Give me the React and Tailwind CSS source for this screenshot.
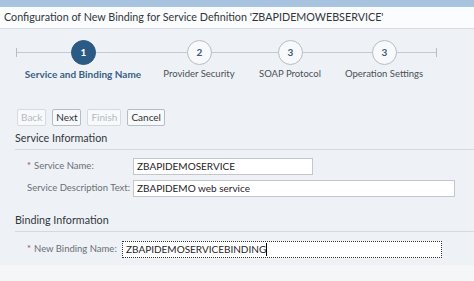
import { Fragment } from 'react';

const steps = [
  { n: '1', label: 'Service and Binding Name', x: 83, active: true },
  { n: '2', label: 'Provider Security', x: 199 },
  { n: '3', label: 'SOAP Protocol', x: 290 },
  { n: '3', label: 'Operation Settings', x: 384 },
];

function Stepper() {
  return (
    <div className="relative h-[64px]">
      {/* track */}
      <div className="absolute left-[16px] top-[21px] w-[420px] h-px bg-[#c5c9cd]" />
      <div className="absolute left-[16px] top-[17px] w-px h-[9px] bg-[#b9bdc1]" />
      <div className="absolute left-[436px] top-[17px] w-px h-[9px] bg-[#b9bdc1]" />
      {steps.map((s, i) => (
        <Fragment key={i}>
          <div
            className={`absolute top-[9px] w-[25px] h-[25px] -ml-[12px] rounded-full flex items-center justify-center text-[10px] font-bold ${
              s.active
                ? 'bg-[#2b5a85] text-white border border-[#2b5a85]'
                : 'bg-[#f7f9fb] text-[#3d5a78] border border-[#b8bdc2]'
            }`}
            style={{ left: s.x }}
          >
            {s.n}
          </div>
          <div
            className={`absolute top-[36px] -translate-x-1/2 whitespace-nowrap ${
              s.active ? 'text-[10px] font-bold text-[#3b5f85]' : 'text-[9.5px] text-[#4a4f55]'
            }`}
            style={{ left: s.x }}
          >
            {s.label}
          </div>
        </Fragment>
      ))}
    </div>
  );
}

function Btn({ children, disabled }) {
  return (
    <div
      className={`h-[17px] px-[3px] flex items-center border rounded-[2px] text-[10px] bg-[#f7f9fb] ${
        disabled ? 'border-[#d7dbdf] text-[#b4b9be]' : 'border-[#b7bcc1] text-[#2e3338]'
      }`}
    >
      {children}
    </div>
  );
}

function Row({ label, required, value, width, labelW, dotted }) {
  return (
    <div className="flex items-center h-[22px]">
      <div className="pl-[12px] text-[9.5px] text-[#6a6f75] flex items-center whitespace-nowrap" style={{ width: labelW }}>
        {required && <span className="text-[#c0394f] mr-[3px]">*</span>}
        {label}
      </div>
      <div
        className={`h-[17px] flex items-center pl-[3px] bg-white text-[10px] text-[#1f2327] ${
          dotted ? 'border border-dotted border-[#333]' : 'border border-[#c3c7cb]'
        }`}
        style={{ width }}
      >
        {value}
        {dotted && <span className="w-px h-[13px] bg-black" />}
      </div>
    </div>
  );
}

export default function App() {
  return (
    <div className="w-[474px] h-[281px] overflow-hidden bg-[#f4f6f8] font-['Lato',sans-serif]">
      <div className="h-[7px] bg-[#a8c3df]" />
      <div className="h-[22px] flex items-center pl-[4px] bg-[#fbfcfd] border-b border-[#d9dde1] text-[10.75px] text-[#32363a] whitespace-nowrap">
        Configuration of New Binding for Service Definition 'ZBAPIDEMOWEBSERVICE'
      </div>
      <div className="bg-[#eef2f6] h-[236px] pl-[15px]">
        <div className="-ml-[15px] pt-[2px]">
          <Stepper />
        </div>
        <div className="flex gap-[6px] mt-[14px] ml-[2px]">
          <Btn disabled>Back</Btn>
          <Btn>Next</Btn>
          <Btn disabled>Finish</Btn>
          <Btn>Cancel</Btn>
        </div>
        <div className="mt-[2px] h-[22px] flex items-center border-b border-[#d5d9dd] text-[10.75px] text-[#32363a]">
          Service Information
        </div>
        <div className="mt-[5px]">
          <Row label="Service Name:" required value="ZBAPIDEMOSERVICE" width={180} labelW={118} />
          <Row label="Service Description Text:" value="ZBAPIDEMO web service" width={322} labelW={118} />
        </div>
        <div className="mt-[11px] h-[22px] flex items-center border-b border-[#d5d9dd] text-[10.75px] text-[#32363a]">
          Binding Information
        </div>
        <div className="mt-[6px]">
          <Row label="New Binding Name:" required value="ZBAPIDEMOSERVICEBINDING" width={320} labelW={107} dotted />
        </div>
      </div>
    </div>
  );
}
